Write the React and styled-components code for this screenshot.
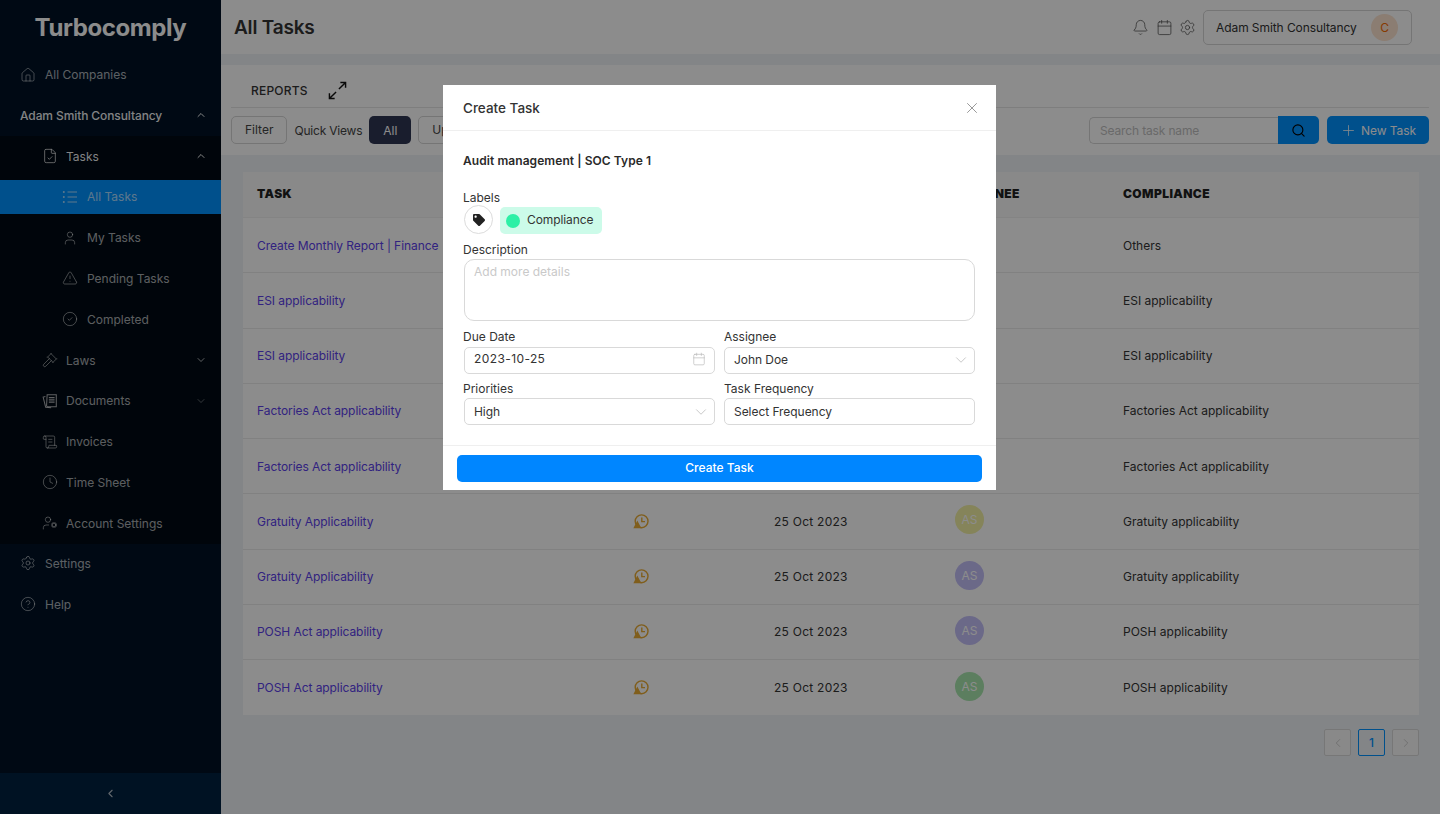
import React from "react";
import styled, { createGlobalStyle } from "styled-components";
import {
  Home, ChevronUp, ChevronDown, ChevronLeft, ChevronRight, FileCheck, User, TriangleAlert,
  CircleCheck, Gavel, ScrollText, Clock, UserCog, Settings, CircleHelp, Bell, Calendar, Search, Plus, X,
} from "lucide-react";
import { FaTag } from "react-icons/fa";

const Global = createGlobalStyle`
  html, body { margin: 0; padding: 0; height: 100%; overflow: hidden; }
  body { font-family: Inter, "Liberation Sans", sans-serif; font-size: 12px; color: #333; background: #eff3f6; }
  * { box-sizing: border-box; }
`;

const Shell = styled.div`display: flex; height: 814px; width: 1440px; overflow: hidden;`;

const Side = styled.aside`
  width: 221px; flex: none; background: #001226; display: flex; flex-direction: column;
  color: rgba(255,255,255,.65);
`;
const Logo = styled.div`
  height: 58px; display: flex; align-items: center; justify-content: center; padding-bottom: 4px;
  color: #fff; font-size: 24px; font-weight: 700; letter-spacing: -0.4px;
`;
const NavItem = styled.div`
  height: 34px; display: flex; align-items: center; margin-bottom: ${p => p.$mb ?? 6.8}px;
  padding-left: ${p => p.$pad}px; padding-right: 14px; gap: ${p => p.$gap ?? 9}px;
  font-size: 12px; padding-bottom: 1px;
  color: ${p => p.$bright ? "rgba(255,255,255,.95)" : "rgba(255,255,255,.68)"};
  background: ${p => p.$active ? "#0092ff" : "transparent"};
  font-weight: ${p => p.$strong ? 500 : 400};
  letter-spacing: ${p => p.$strong ? "-.1px" : "0"};
  svg { flex: none; }
`;
const NavLabel = styled.span`flex: 1;`;
const SubMenu = styled.div`background: #000a14; padding: 4px 0 0; margin: -4px 0 3px; height: 408px;`;
const Collapse = styled.div`
  margin-top: auto; height: 41px; background: #002140; display: flex; align-items: center; justify-content: center;
  color: rgba(255,255,255,.7);
`;

const Main = styled.main`flex: 1; min-width: 0; display: flex; flex-direction: column;`;
const TopBar = styled.header`
  height: 54px; background: #fff; display: flex; align-items: center; padding: 0 28px 0 13px; flex: none;
`;
const PageTitle = styled.h1`margin: 0; font-size: 19px; font-weight: 600; color: #333; letter-spacing: -0.2px; flex: 1;`;
const TopIcons = styled.div`display: flex; gap: 6.5px; margin-right: 7px; color: #555; align-items: center;`;
const CompanyButton = styled.div`
  width: 209px; height: 35px; border: 1px solid #d5d5d5; border-radius: 5px; display: flex; align-items: center;
  justify-content: space-between; padding: 0 13px 0 12px; font-size: 12px; color: #333; letter-spacing: -.08px;
`;
const CompanyAvatar = styled.span`
  width: 27px; height: 27px; border-radius: 50%; background: #fde3cf; color: #f56a00; display: flex;
  align-items: center; justify-content: center; font-size: 12px;
`;
const Panel = styled.section`margin-top: 11px; background: #fff; height: 90px; padding: 0 11px 0 10px; flex: none;`;
const TabRow = styled.div`
  height: 43px; border-bottom: 1px solid #e5e5e5; display: flex; align-items: center; padding: 9px 0 0 20px; gap: 20px;
`;
const TabText = styled.span`font-size: 12px; font-weight: 500; letter-spacing: .2px; color: #333;`;
const ToolRow = styled.div`display: flex; align-items: center; margin-top: 8px; height: 28px;`;
const OutlineBtn = styled.div`
  height: 28px; border: 1px solid #d5d5d5; border-radius: 5px; padding: 0 13px 1px; display: flex; align-items: center;
  font-size: 12px; color: #444; background: #fff;
`;
const QuickLabel = styled.span`margin: 0 7px; font-size: 12px; color: #444; letter-spacing: -.2px;`;
const DarkBtn = styled.div`
  height: 28px; width: 42px; border-radius: 5px; background: #2f3553; color: #fff; display: flex; align-items: center;
  justify-content: center; font-size: 12px; margin-right: 7px;
`;
const Spacer = styled.div`flex: 1;`;
const SearchBox = styled.div`
  width: 189px; height: 27px; border: 1px solid #d5d5d5; border-right: 0; border-radius: 5px 0 0 5px; padding: 0 10px;
  display: flex; align-items: center; font-size: 12px; color: #bfbfbf; letter-spacing: -.15px;
`;
const SearchBtn = styled.div`
  width: 41px; height: 28px; background: #0092ff; border-radius: 0 5px 5px 0; color: #000; display: flex;
  align-items: center; justify-content: center; margin-right: 8px;
`;
const PrimaryBtn = styled.div`
  width: 102px; height: 28px; background: #0092ff; border-radius: 5px; color: #fff; display: flex; align-items: center;
  justify-content: center; gap: 4px; font-size: 12px; letter-spacing: -.05px;
`;

const TableWrap = styled.div`margin: 17px 21px 0 22px; background: #fff;`;
const cols = "376px 141px 181px 168px 1fr";
const HeadRow = styled.div`
  display: grid; grid-template-columns: ${cols}; height: 46px; align-items: center; background: #fafafa;
  border-bottom: 1px solid #f0f0f0; font-size: 12px; font-weight: 900; letter-spacing: .4px; color: #222; padding-bottom: 2px;
`;
const Row = styled.div`
  display: grid; grid-template-columns: ${cols}; height: 55.25px; align-items: center;
  border-bottom: 1px solid #ececec; font-size: 12px; color: #333;
  &:last-child { border-bottom: 0; }
`;
const Cell = styled.div`
  padding-left: 14px; min-width: 0; white-space: nowrap; display: flex; align-items: center;
  ${p => p.$wide ? "letter-spacing: .25px;" : ""}
`;
const TaskLink = styled.span`color: #5b40ea; letter-spacing: -.07px;`;
const Avatar = styled.span`
  width: 29px; height: 29px; border-radius: 50%; background: ${p => p.$bg}; color: #fff;
  display: flex; align-items: center; justify-content: center; font-size: 12px; margin-top: -3px;
`;
const Pager = styled.div`display: flex; justify-content: flex-end; gap: 7px; margin: 14px 21px 0 0;`;
const PageBox = styled.div`
  width: 27px; height: 27px; border: 1px solid ${p => p.$on ? "#0092ff" : "#d9d9d9"}; border-radius: 2px;
  display: flex; align-items: center; justify-content: center; font-size: 12px; font-weight: 500;
  color: ${p => p.$on ? "#0092ff" : "#b5b5b5"}; background: ${p => p.$on ? "transparent" : "#fafafa"};
`;

const Overlay = styled.div`
  position: fixed; inset: 0; background: rgba(0,0,0,.45); display: flex; justify-content: center; align-items: flex-start;
  padding: 85px 1px 0 0;
`;
const Modal = styled.div`
  width: 553px; height: 405px; background: #fff; display: flex; flex-direction: column; color: #333;
  font-size: 12px;
`;
const ModalHead = styled.div`
  height: 46px; flex: none; border-bottom: 1px solid #efefef; display: flex; align-items: center; justify-content: space-between;
  padding: 0 15px 0 20px; font-size: 13.5px; font-weight: 500; color: #333;
  svg { color: #777; }
`;
const ModalBody = styled.div`flex: 1; padding: 23px 21px 0 20px;`;
const Subject = styled.div`font-weight: 600; color: #2a2a2a; line-height: 14px; margin-bottom: 23px; letter-spacing: .07px;`;
const FieldLabel = styled.div`line-height: 14px; color: #333; height: 14px;`;
const LabelsRow = styled.div`display: flex; align-items: center; gap: 7px; margin: 0 0 9px 1px; height: 29px;`;
const TagCircle = styled.div`
  width: 29px; height: 29px; border-radius: 50%; border: 1px solid #dcdcdc; display: flex; align-items: center; justify-content: center;
  color: #222;
`;
const Chip = styled.div`
  width: 102px; height: 27px; margin-top: 1px; border-radius: 5px; background: #ccfbe9; display: flex; align-items: center; gap: 7px;
  padding-left: 6px; color: #333;
`;
const ChipDot = styled.span`width: 14px; height: 14px; border-radius: 50%; background: #2cf0a6; flex: none; margin-top: 1px;`;
const ChipText = styled.span`margin-top: -2px; letter-spacing: -.1px;`;
const TextArea = styled.div`
  height: 62px; margin: 2px 0 9px 1px; border: 1px solid #d9d9d9; border-radius: 10px; padding: 4px 9px; color: #c9c9c9; line-height: 15px;
`;
const FieldGrid = styled.div`display: grid; grid-template-columns: 252px 251px; column-gap: 9px; row-gap: 8px;`;
const Field = styled.div`display: flex; flex-direction: column; gap: ${p => p.$tight ? 2 : 3}px;`;
const Control = styled.div`
  height: 27px; margin-left: ${p => p.$shift ? 1 : 0}px; border: 1px solid #d9d9d9; border-radius: 5px; display: flex; align-items: center;
  justify-content: space-between; padding: 0 9px ${p => p.$lift ?? 1}px; color: #333;
  letter-spacing: ${p => p.$digits ? ".4px" : "-.05px"};
  svg { color: #b5b5b5; flex: none; margin-right: ${p => p.$chev ? -5 : -1}px; }
`;
const ModalFoot = styled.div`height: 45px; flex: none; border-top: 1px solid #efefef; padding: 9px 14px 0;`;
const SubmitBtn = styled.div`
  height: 27px; background: #0086ff; color: #fff; border-radius: 5px; display: flex; align-items: center; justify-content: center;
  font-weight: 500; font-size: 12px; padding-bottom: 2px;
`;

const ListIcon = () => (
  <svg width="16" height="16" viewBox="0 0 16 16" fill="none" stroke="currentColor" strokeWidth="1">
    <path d="M5.5 3h9.5M5.5 8h9.5M5.5 13h9.5" />
    <circle cx="1.8" cy="3" r="1" fill="currentColor" stroke="none" />
    <circle cx="1.8" cy="8" r="1" fill="currentColor" stroke="none" />
    <circle cx="1.8" cy="13" r="1" fill="currentColor" stroke="none" />
  </svg>
);
const DocsIcon = () => (
  <svg width="16" height="16" viewBox="0 0 14 14" fill="none" stroke="currentColor" strokeWidth=".9">
    <path d="M4.5 1.5h8v10.5h-7.5a1 1 0 0 1-1-1z" />
    <path d="M6 4h5M6 6h5M6 8h5" strokeWidth="1.1" />
    <path d="M3 3 1 3.6 3.2 12.4 8 13" />
  </svg>
);
const ExpandIcon = () => (
  <svg width="19" height="19" viewBox="0 0 20 20" fill="none" stroke="#111" strokeWidth="1.5">
    <path d="M11.5 8.5 18.5 1.5M13 1.5h5.5V7" />
    <path d="M8.5 11.5 1.5 18.5M1.5 13v5.5H7" />
  </svg>
);
const LateIcon = () => (
  <svg width="16" height="15" viewBox="0 0 16 15" fill="none">
    <circle cx="8.6" cy="7.3" r="6.4" stroke="#e9ab33" strokeWidth="1.4" />
    <path d="M8.8 3.6v4h3.2" stroke="#e9ab33" strokeWidth="1.4" />
    <path d="M4.3 6.6 8.4 14.2H0.4z" fill="#e9ab33" />
  </svg>
);

const rows = [
  ["Create Monthly Report | Finance", "#a9dcae", "Others"],
  ["ESI applicability", "#c4bff8", "ESI applicability"],
  ["ESI applicability", "#c4bff8", "ESI applicability"],
  ["Factories Act applicability", "#a9dcae", "Factories Act applicability"],
  ["Factories Act applicability", "#c4bff8", "Factories Act applicability"],
  ["Gratuity Applicability", "#f2f0a4", "Gratuity applicability"],
  ["Gratuity Applicability", "#c4bff8", "Gratuity applicability"],
  ["POSH Act applicability", "#c4bff8", "POSH applicability"],
  ["POSH Act applicability", "#a8e6ae", "POSH applicability"],
];
const S = { strokeWidth: 1.1 };

export default function App() {
  return (
    <>
      <Global />
      <Shell>
        <Side>
          <Logo>Turbocomply</Logo>
          <NavItem $pad={20}><Home size={16} {...S} /><NavLabel>All Companies</NavLabel></NavItem>
          <NavItem $pad={20} $bright $strong><NavLabel>Adam Smith Consultancy</NavLabel><ChevronUp size={12} /></NavItem>
          <SubMenu>
            <NavItem $pad={42} $gap={8} $bright><FileCheck size={16} {...S} /><NavLabel>Tasks</NavLabel><ChevronUp size={12} /></NavItem>
            <NavItem $pad={62} $active><ListIcon /><NavLabel>All Tasks</NavLabel></NavItem>
            <NavItem $pad={62}><User size={16} {...S} /><NavLabel>My Tasks</NavLabel></NavItem>
            <NavItem $pad={62}><TriangleAlert size={16} {...S} /><NavLabel>Pending Tasks</NavLabel></NavItem>
            <NavItem $pad={62}><CircleCheck size={16} {...S} /><NavLabel>Completed</NavLabel></NavItem>
            <NavItem $pad={42} $gap={8}><Gavel size={16} {...S} /><NavLabel>Laws</NavLabel><ChevronDown size={12} /></NavItem>
            <NavItem $pad={42} $gap={8}><DocsIcon /><NavLabel>Documents</NavLabel><ChevronDown size={12} {...S} /></NavItem>
            <NavItem $pad={42} $gap={8}><ScrollText size={16} {...S} /><NavLabel>Invoices</NavLabel></NavItem>
            <NavItem $pad={42} $gap={8}><Clock size={16} {...S} /><NavLabel>Time Sheet</NavLabel></NavItem>
            <NavItem $pad={42} $gap={8} $mb={0}><UserCog size={16} {...S} /><NavLabel>Account Settings</NavLabel></NavItem>
          </SubMenu>
          <NavItem $pad={20} $mb={7}><Settings size={16} {...S} /><NavLabel>Settings</NavLabel></NavItem>
          <NavItem $pad={20}><CircleHelp size={16} {...S} /><NavLabel>Help</NavLabel></NavItem>
          <Collapse><ChevronLeft size={13} /></Collapse>
        </Side>
        <Main>
          <TopBar>
            <PageTitle>All Tasks</PageTitle>
            <TopIcons>
              <Bell size={17} {...S} /><Calendar size={17} {...S} /><Settings size={17} {...S} />
            </TopIcons>
            <CompanyButton>Adam Smith Consultancy<CompanyAvatar>C</CompanyAvatar></CompanyButton>
          </TopBar>
          <Panel>
            <TabRow><TabText>REPORTS</TabText><ExpandIcon /></TabRow>
            <ToolRow>
              <OutlineBtn>Filter</OutlineBtn>
              <QuickLabel>Quick Views</QuickLabel>
              <DarkBtn>All</DarkBtn>
              <OutlineBtn>Upcoming</OutlineBtn>
              <Spacer />
              <SearchBox>Search task name</SearchBox>
              <SearchBtn><Search size={15} strokeWidth={1.8} /></SearchBtn>
              <PrimaryBtn><Plus size={17} {...S} />New Task</PrimaryBtn>
            </ToolRow>
          </Panel>
          <TableWrap>
            <HeadRow>
              <Cell>TASK</Cell><Cell>PRIORITY</Cell><Cell>DUE DATE</Cell><Cell>ASSIGNEE</Cell><Cell>COMPLIANCE</Cell>
            </HeadRow>
            {rows.map(([task, color, comp], i) => (
              <Row key={i}>
                <Cell><TaskLink>{task}</TaskLink></Cell>
                <Cell><LateIcon /></Cell>
                <Cell $wide>25 Oct 2023</Cell>
                <Cell><Avatar $bg={color}>AS</Avatar></Cell>
                <Cell>{comp}</Cell>
              </Row>
            ))}
          </TableWrap>
          <Pager>
            <PageBox><ChevronLeft size={14} {...S} /></PageBox>
            <PageBox $on>1</PageBox>
            <PageBox><ChevronRight size={14} {...S} /></PageBox>
          </Pager>
        </Main>
      </Shell>
      <Overlay>
        <Modal>
          <ModalHead>Create Task<X size={18} strokeWidth={1} /></ModalHead>
          <ModalBody>
            <Subject>Audit management | SOC Type 1</Subject>
            <FieldLabel>Labels</FieldLabel>
            <LabelsRow>
              <TagCircle><FaTag size={12} /></TagCircle>
              <Chip><ChipDot /><ChipText>Compliance</ChipText></Chip>
            </LabelsRow>
            <FieldLabel>Description</FieldLabel>
            <TextArea>Add more details</TextArea>
            <FieldGrid>
              <Field><FieldLabel>Due Date</FieldLabel><Control $shift $digits $lift={4}>2023-10-25<Calendar size={14} {...S} /></Control></Field>
              <Field><FieldLabel>Assignee</FieldLabel><Control $chev $lift={2}>John Doe<ChevronDown size={18} strokeWidth={1} /></Control></Field>
              <Field $tight><FieldLabel>Priorities</FieldLabel><Control $shift $chev $lift={0}>High<ChevronDown size={18} strokeWidth={1} /></Control></Field>
              <Field $tight><FieldLabel>Task Frequency</FieldLabel><Control>Select Frequency</Control></Field>
            </FieldGrid>
          </ModalBody>
          <ModalFoot><SubmitBtn>Create Task</SubmitBtn></ModalFoot>
        </Modal>
      </Overlay>
    </>
  );
}
